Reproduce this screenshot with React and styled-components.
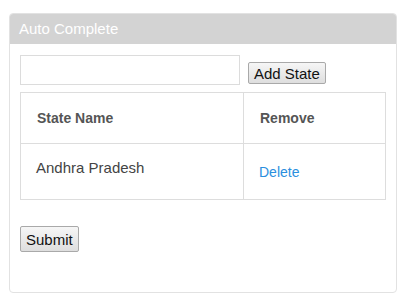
import styled, { createGlobalStyle } from "styled-components";

const GlobalStyle = createGlobalStyle`
  body {
    margin: 0;
    background: #fff;
    font-family: "Liberation Sans", Arial, sans-serif;
  }
`;

const Page = styled.div`
  padding: 13px 13px 14px 9px;
`;

const Panel = styled.div`
  width: 388px;
  border: 1px solid #e2e2e2;
  border-radius: 4px;
  box-sizing: border-box;
  overflow: hidden;
`;

const PanelHeading = styled.div`
  height: 30px;
  background: #d3d3d3;
  color: #fff;
  font-size: 15px;
  line-height: 30px;
  padding-left: 9px;
`;

const PanelBody = styled.div`
  padding: 11px 11px 40px 10px;
`;

const Toolbar = styled.div`
  display: flex;
  align-items: flex-end;
  gap: 8px;
`;

const TextInput = styled.input`
  width: 220px;
  height: 30px;
  box-sizing: border-box;
  border: 1px solid #dcdcdc;
  outline: none;
  font-size: 14px;
  padding: 0 6px;
`;

const Button = styled.button`
  font-family: "Liberation Sans", Arial, sans-serif;
  font-size: 15px;
  color: #111;
  height: ${(p) => p.$h}px;
  padding: 0 5px;
  border: 1px solid #a9a9a9;
  border-radius: 2px;
  background: linear-gradient(#f6f6f6, #dedede);
  margin-bottom: ${(p) => p.$mb || 0}px;
`;

const Table = styled.table`
  width: 366px;
  margin-top: 7px;
  border-collapse: collapse;
`;

const HeadCell = styled.th`
  border: 1px solid #dddddd;
  text-align: left;
  font-size: 14px;
  font-weight: bold;
  color: #555;
  line-height: 20px;
  padding: 15px 16px;
  width: ${(p) => p.$w || "auto"};
`;

const Cell = styled.td`
  border: 1px solid #dddddd;
  line-height: 20px;
  vertical-align: top;
  padding: ${(p) => (p.$raised ? "14px 15px 21px" : "18px 15px 17px")};
  font-size: ${(p) => p.$size}px;
  color: #444;
`;

const DeleteLink = styled.a`
  color: #2b8fde;
  text-decoration: none;
  cursor: pointer;
`;

const Footer = styled.div`
  margin-top: 26px;
`;

export default function App() {
  return (
    <>
      <GlobalStyle />
      <Page>
        <Panel>
          <PanelHeading>Auto Complete</PanelHeading>
          <PanelBody>
            <Toolbar>
              <TextInput type="text" />
              <Button $h={22} $mb={1}>Add State</Button>
            </Toolbar>
            <Table>
              <thead>
                <tr>
                  <HeadCell $w="190px">State Name</HeadCell>
                  <HeadCell>Remove</HeadCell>
                </tr>
              </thead>
              <tbody>
                <tr>
                  <Cell $raised $size={15}>Andhra Pradesh</Cell>
                  <Cell $size={14}>
                    <DeleteLink>Delete</DeleteLink>
                  </Cell>
                </tr>
              </tbody>
            </Table>
            <Footer>
              <Button $h={26}>Submit</Button>
            </Footer>
          </PanelBody>
        </Panel>
      </Page>
    </>
  );
}
